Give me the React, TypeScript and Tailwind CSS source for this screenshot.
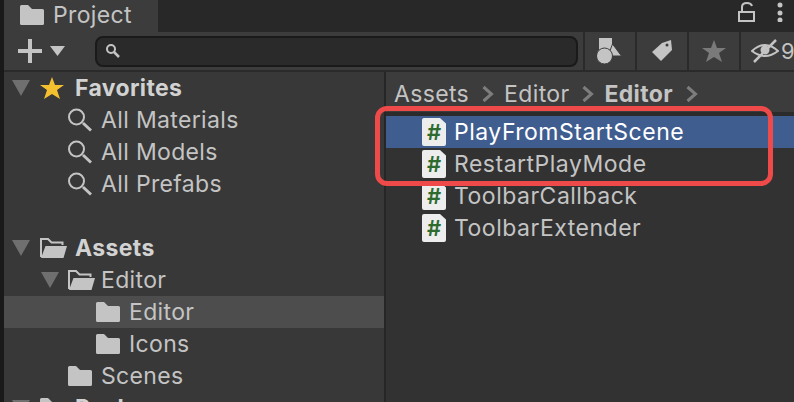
const font = { fontFamily: "Inter, 'Liberation Sans', sans-serif" };

function Tri({ className = "" }: { className?: string }) {
  return (
    <svg width="18" height="16" viewBox="0 0 18 16" className={className}>
      <path d="M0 0H18L9 16Z" fill="#6f6f6f" />
    </svg>
  );
}
function Folder() {
  return (
    <svg width="24" height="20" viewBox="0 0 24 20" className="shrink-0">
      <path d="M0 1.500Q0 0 1.500 0H8L12 4H22.500Q24 4 24 5.500V18.500Q24 20 22.500 20H1.500Q0 20 0 18.500Z" fill="#c4c4c4" />
    </svg>
  );
}
function OpenFolder() {
  return (
    <svg width="27" height="20" viewBox="0 0 27 20" className="shrink-0">
      <path d="M1 19V1H8L11.500 4.500H22.500V7" fill="none" stroke="#c4c4c4" strokeWidth="2" />
      <path d="M5.500 8H27L23.500 20H1Z" fill="#c4c4c4" />
    </svg>
  );
}
function Lens() {
  return (
    <svg width="24" height="24" viewBox="0 0 24 24" className="shrink-0">
      <circle cx="8.500" cy="9" r="7.500" fill="none" stroke="#c4c4c4" strokeWidth="2" />
      <path d="M15 15L23 22.500" stroke="#c4c4c4" strokeWidth="3" />
    </svg>
  );
}
function Script() {
  return (
    <div className="flex h-7 w-6 shrink-0 items-center justify-center rounded-[2px] bg-[#ededed] text-[22px] font-semibold leading-none text-[#2e6b2e] [clip-path:polygon(0_0,75%_0,100%_20%,100%_100%,0_100%)]">
      #
    </div>
  );
}
function TreeRow({ indent, icon, label, bold, active, arrow, arrowGap, labelGap }: { indent: string; icon: React.ReactNode; label: string; bold?: boolean; active?: boolean; arrow?: boolean; arrowGap?: string; labelGap?: string }) {
  return (
    <div className={`flex h-8 items-center ${indent} ${active ? "bg-[#4d4d4d]" : ""}`}>
      {arrow && <Tri className={`shrink-0 ${arrowGap ?? "mr-[10px]"}`} />}
      {icon}
      <span className={`${labelGap ?? "ml-[9px]"} whitespace-nowrap pb-[1px] text-[23px] leading-8 tracking-[0.35px] ${bold ? "font-bold text-[#d2d2d2]" : "text-[#c4c4c4]"}`}>{label}</span>
    </div>
  );
}
function FileRow({ label, active }: { label: string; active?: boolean }) {
  return (
    <div className={`flex h-8 items-center pl-[36px] ${active ? "bg-[#3f5d8f] text-white" : "text-[#c4c4c4]"}`}>
      <Script />
      <span className="ml-[8px] whitespace-nowrap pt-[1px] text-[23px] tracking-[0.5px]">{label}</span>
    </div>
  );
}
function ToolBtn({ children }: { children: React.ReactNode }) {
  return <div className="flex h-10 w-[52px] shrink-0 items-center justify-center border-l-2 border-[#2a2a2a]">{children}</div>;
}
function Chev() {
  return (
    <svg width="12" height="18" viewBox="0 0 12 18" className="ml-[13px] mr-[10px] shrink-0">
      <path d="M1.500 2L9.500 9L1.500 16" fill="none" stroke="#7d7d7d" strokeWidth="3" />
    </svg>
  );
}

export default function App() {
  return (
    <div className="relative flex h-[402px] w-[794px] overflow-hidden bg-[#191919]" style={font}>
      <div className="w-1 shrink-0" />
      <div className="flex min-w-0 flex-1 flex-col">
        <div className="flex h-8 shrink-0 bg-[#282828]">
          <div className="flex w-[154px] items-center bg-[#3c3c3c] pb-[2px] pl-4 text-[#c4c4c4]">
            <Folder />
            <span className="ml-[9px] text-[23px] tracking-[0.35px]">Project</span>
          </div>
          <div className="ml-auto flex items-start gap-[21px] pr-[11px] pt-[2px]">
            <svg width="18" height="20" viewBox="0 0 18 20">
              <path d="M4 10V5Q4 1 9 1Q13 1 14 4" fill="none" stroke="#c4c4c4" strokeWidth="2" />
              <rect x="1" y="10" width="15" height="9" fill="none" stroke="#c4c4c4" strokeWidth="2" />
            </svg>
            <svg width="6" height="20" viewBox="0 0 6 20">
              <circle cx="3" cy="3" r="2.500" fill="#c4c4c4" />
              <circle cx="3" cy="11" r="2.500" fill="#c4c4c4" />
              <circle cx="3" cy="18" r="2.500" fill="#c4c4c4" />
            </svg>
          </div>
        </div>
        <div className="flex h-10 shrink-0 items-center border-b-2 border-[#2a2a2a] bg-[#3c3c3c]">
          <svg width="24" height="24" viewBox="0 0 24 24" className="ml-[14px] shrink-0">
            <path d="M12 0V24M0 12H24" stroke="#c4c4c4" strokeWidth="4" />
          </svg>
          <svg width="15" height="10" viewBox="0 0 15 10" className="ml-[8px] shrink-0">
            <path d="M0 0H15L7.500 10Z" fill="#c4c4c4" />
          </svg>
          <div className="ml-[30px] flex h-[31px] w-[483px] shrink-0 items-center rounded-[8px] border-2 border-[#1a1a1a] bg-[#2a2a2a] pl-2">
            <svg width="16" height="16" viewBox="0 0 16 16">
              <circle cx="6" cy="6" r="4" fill="none" stroke="#c4c4c4" strokeWidth="2" />
              <path d="M9 9L14 14" stroke="#c4c4c4" strokeWidth="2.500" />
            </svg>
          </div>
          <div className="ml-[5px] flex">
            <ToolBtn>
              <svg width="26" height="26" viewBox="0 0 26 26">
                <rect x="2" y="0" width="13" height="13" fill="#c4c4c4" />
                <path d="M15.500 6L24.500 18H11Z" fill="#c4c4c4" stroke="#3c3c3c" strokeWidth="1" />
                <circle cx="7.500" cy="18" r="8" fill="#c4c4c4" stroke="#3c3c3c" strokeWidth="1" />
              </svg>
            </ToolBtn>
            <ToolBtn>
              <svg width="22" height="22" viewBox="0 0 22 22">
                <path d="M11 3L20 0L21 10L10 21L1 12Z" fill="#c4c4c4" />
                <circle cx="16" cy="5" r="1.500" fill="#3c3c3c" />
              </svg>
            </ToolBtn>
            <ToolBtn>
              <svg width="24" height="22" viewBox="0 0 24 22">
                <path d="M12 0L15 8H24L17 13L20 22L12 17L4 22L7 13L0 8H9Z" fill="#7a7a7a" />
              </svg>
            </ToolBtn>
            <div className="flex h-10 flex-1 items-center whitespace-nowrap border-l-2 border-[#2a2a2a] pl-[10px] text-[22px] text-[#c4c4c4]">
              <svg width="28" height="24" viewBox="0 0 28 24" className="shrink-0">
                <path d="M1 12Q14 0 27 12Q14 22 1 12Z" fill="none" stroke="#c4c4c4" strokeWidth="2" />
                <circle cx="14" cy="11" r="4.500" fill="#c4c4c4" />
                <path d="M3 23L25 1" stroke="#c4c4c4" strokeWidth="2.500" />
              </svg>
              <span className="ml-[2px]">9</span>
            </div>
          </div>
        </div>
        <div className="flex min-h-0 flex-1">
          <div className="w-[380px] shrink-0 overflow-hidden bg-[#383838]">
            <TreeRow indent="pl-[8px]" arrow labelGap="ml-[11px]" icon={<svg width="24" height="22" viewBox="0 0 24 22" className="shrink-0"><path d="M12 0L15 8H24L17 13L20 22L12 17L4 22L7 13L0 8H9Z" fill="#f5c02f" /></svg>} label="Favorites" bold />
            <TreeRow indent="pl-[64px]" icon={<Lens />} label="All Materials" />
            <TreeRow indent="pl-[64px]" icon={<Lens />} label="All Models" />
            <TreeRow indent="pl-[64px]" icon={<Lens />} label="All Prefabs" />
            <div className="h-8" />
            <TreeRow indent="pl-[8px]" arrow labelGap="ml-[8px]" icon={<OpenFolder />} label="Assets" bold />
            <TreeRow indent="pl-[37px]" arrow arrowGap="mr-[9px]" labelGap="ml-[6px]" icon={<OpenFolder />} label="Editor" />
            <TreeRow indent="pl-[92px]" icon={<Folder />} label="Editor" active />
            <TreeRow indent="pl-[92px]" icon={<Folder />} label="Icons" />
            <TreeRow indent="pl-[64px]" icon={<Folder />} label="Scenes" />
            <TreeRow indent="pl-[8px]" arrow labelGap="ml-[11px]" icon={<Folder />} label="Packages" bold />
          </div>
          <div className="w-[2px] shrink-0 bg-[#262626]" />
          <div className="flex min-w-0 flex-1 flex-col bg-[#323232]">
            <div className="flex h-[40px] shrink-0 items-center bg-[#3c3c3c] pl-[8px] pt-[4px] text-[23px] tracking-[0.35px] text-[#c4c4c4]">
              <span>Assets</span>
              <Chev />
              <span>Editor</span>
              <Chev />
              <span className="font-bold">Editor</span>
              <Chev />
            </div>
            <div className="h-[4px] shrink-0 bg-[#2b2b2b]" />
            <FileRow label="PlayFromStartScene" active />
            <FileRow label="RestartPlayMode" />
            <FileRow label="ToolbarCallback" />
            <FileRow label="ToolbarExtender" />
          </div>
        </div>
      </div>
      <div className="absolute left-[375px] top-[106px] h-[80px] w-[398px] rounded-[12px] border-[5px] border-[#ee4a4a]" />
    </div>
  );
}
